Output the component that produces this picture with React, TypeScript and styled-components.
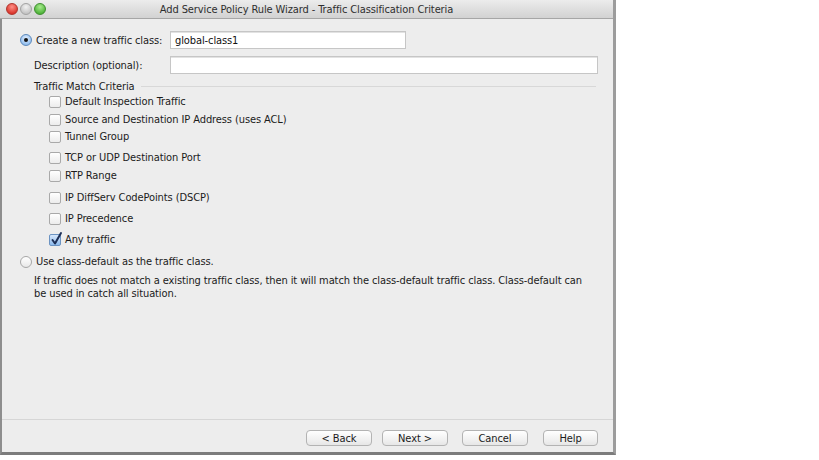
import React from "react";
import styled, { createGlobalStyle } from "styled-components";

const GlobalStyle = createGlobalStyle`
  html, body { margin: 0; padding: 0; background: #ffffff; }
  body {
    font-family: "DejaVu Sans Condensed", "DejaVu Sans", sans-serif;
    font-size: 11px;
    letter-spacing: -0.1px;
    color: #1b1b1b;
  }
  * { box-sizing: border-box; }
`;

const Window = styled.div`
  width: 616px;
  height: 455px;
  display: flex;
  flex-direction: column;
  background: #ededed;
  border-left: 2px solid #8e8e8e;
  border-right: 3px solid #9c9c9c;
  border-bottom: 3px solid #7c7c7c;
`;

const TitleBar = styled.div`
  height: 19px;
  flex: 0 0 19px;
  position: relative;
  display: flex;
  align-items: center;
  justify-content: center;
  background: linear-gradient(#ececec, #d2d2d2);
  border-bottom: 1px solid #a6a6a6;
  margin-left: -2px;
`;

const Lights = styled.div`
  position: absolute;
  left: 6px;
  top: 3px;
  display: flex;
  gap: 2px;
`;

const Light = styled.span<{ $c1: string; $c2: string; $b: string }>`
  width: 12px;
  height: 12px;
  border-radius: 50%;
  background: radial-gradient(circle at 50% 30%, ${(p) => p.$c1}, ${(p) => p.$c2} 75%);
  border: 1px solid ${(p) => p.$b};
`;

const Title = styled.div`
  font-size: 11px;
  color: #2e2e2e;
  padding-top: 1px;
`;

const Content = styled.div`
  flex: 1;
  padding: 12px 16px 0 18px;
  display: flex;
  flex-direction: column;
`;

const FieldRow = styled.div`
  display: grid;
  grid-template-columns: 150px auto;
  align-items: center;
  height: 18px;
  margin-bottom: 7px;
`;

const LabelWrap = styled.label<{ $indent?: boolean }>`
  display: flex;
  align-items: center;
  gap: 4px;
  padding-left: ${(p) => (p.$indent ? "14px" : "0")};
  white-space: nowrap;
`;

const TextInput = styled.div<{ $w: number }>`
  width: ${(p) => p.$w}px;
  height: 18px;
  background: #ffffff;
  border: 1px solid #c6c6c6;
  box-shadow: inset 0 1px 0 #e2e2e2;
  padding: 0 4px;
  display: flex;
  align-items: center;
  color: #111;
`;

const GroupHeader = styled.div`
  display: flex;
  align-items: center;
  gap: 6px;
  height: 13px;
  margin-top: -1px;
  padding-left: 14px;
  margin-right: 1px;
  &::after {
    content: "";
    flex: 1;
    height: 1px;
    background: #d8d8d8;
  }
`;

const CheckList = styled.div`
  display: flex;
  flex-direction: column;
  padding-left: 29px;
  margin-top: 0px;
`;

const CheckRow = styled.label<{ $gap: number }>`
  display: flex;
  align-items: center;
  gap: 4px;
  height: 17px;
  margin-top: ${(p) => p.$gap}px;
`;

const Box = styled.span<{ $checked?: boolean }>`
  position: relative;
  width: 12px;
  height: 12px;
  border-radius: 2px;
  border: 1px solid ${(p) => (p.$checked ? "#6b93c2" : "#a9a9a9")};
  background: ${(p) =>
    p.$checked
      ? "linear-gradient(#d6e7fb, #8dbbee)"
      : "linear-gradient(#ffffff, #ececec)"};
  flex: 0 0 12px;
  svg {
    position: absolute;
    left: 0px;
    top: -4px;
  }
`;

const RadioRow = styled.label`
  display: flex;
  align-items: center;
  gap: 4px;
  height: 17px;
  margin-top: 5px;
`;

const Radio = styled.span<{ $checked?: boolean }>`
  width: 12px;
  height: 12px;
  border-radius: 50%;
  flex: 0 0 12px;
  display: flex;
  align-items: center;
  justify-content: center;
  border: 1px solid ${(p) => (p.$checked ? "#5d89bb" : "#a7a7a7")};
  background: ${(p) =>
    p.$checked
      ? "radial-gradient(circle at 50% 35%, #e3efff, #8ab9ec 80%)"
      : "linear-gradient(#ffffff, #e8e8e8)"};
  &::after {
    content: "";
    display: ${(p) => (p.$checked ? "block" : "none")};
    width: 4px;
    height: 4px;
    border-radius: 50%;
    background: #111;
  }
`;

const Paragraph = styled.p`
  margin: 4px 0 0 0;
  padding-left: 14px;
  padding-right: 0;
  line-height: 13px;
`;

const Footer = styled.div`
  flex: 0 0 33px;
  border-top: 1px solid #d6d6d6;
  display: flex;
  justify-content: flex-end;
  align-items: flex-start;
  padding: 10px 15px 0 0;
  gap: 10px;
`;

const Button = styled.button<{ $w: number; $push?: number }>`
  width: ${(p) => p.$w}px;
  height: 16px;
  margin-left: ${(p) => p.$push ?? 0}px;
  padding: 0;
  font-family: inherit;
  font-size: 11px;
  letter-spacing: inherit;
  color: #1b1b1b;
  background: linear-gradient(#ffffff, #f1f1f1 60%, #e6e6e6);
  border: 1px solid #b3b3b3;
  border-radius: 4px;
  display: flex;
  align-items: center;
  justify-content: center;
  line-height: 1;
`;

const criteria = [
  { label: "Default Inspection Traffic", gap: 0 },
  { label: "Source and Destination IP Address (uses ACL)", gap: 1 },
  { label: "Tunnel Group", gap: 0 },
  { label: "TCP or UDP Destination Port", gap: 4 },
  { label: "RTP Range", gap: 1 },
  { label: "IP DiffServ CodePoints (DSCP)", gap: 5 },
  { label: "IP Precedence", gap: 4 },
  { label: "Any traffic", gap: 4, checked: true },
];

const Check = () => (
  <svg width="14" height="15" viewBox="0 0 14 15">
    <path
      d="M2.5 9 L5 12.5 L11 2"
      fill="none"
      stroke="#1d2f57"
      strokeWidth="2"
      strokeLinecap="round"
      strokeLinejoin="round"
    />
  </svg>
);

export default function App() {
  return (
    <>
      <GlobalStyle />
      <Window>
        <TitleBar>
          <Lights>
            <Light $c1="#ff8f86" $c2="#d9352c" $b="#b0342c" />
            <Light $c1="#f2f2f2" $c2="#c3c3c3" $b="#a3a3a3" />
            <Light $c1="#a8ec8e" $c2="#4fb33a" $b="#3e8e2f" />
          </Lights>
          <Title>Add Service Policy Rule Wizard - Traffic Classification Criteria</Title>
        </TitleBar>
        <Content>
          <FieldRow>
            <LabelWrap>
              <Radio $checked />
              Create a new traffic class:
            </LabelWrap>
            <TextInput $w={236}>global-class1</TextInput>
          </FieldRow>
          <FieldRow>
            <LabelWrap $indent>Description (optional):</LabelWrap>
            <TextInput $w={428} />
          </FieldRow>
          <GroupHeader>Traffic Match Criteria</GroupHeader>
          <CheckList>
            {criteria.map((c) => (
              <CheckRow key={c.label} $gap={c.gap}>
                <Box $checked={c.checked}>{c.checked && <Check />}</Box>
                {c.label}
              </CheckRow>
            ))}
          </CheckList>
          <RadioRow>
            <Radio />
            Use class-default as the traffic class.
          </RadioRow>
          <Paragraph>
            If traffic does not match a existing traffic class, then it will match the
            class-default traffic class. Class-default can be used in catch all situation.
          </Paragraph>
        </Content>
        <Footer>
          <Button $w={66}>&lt; Back</Button>
          <Button $w={66}>Next &gt;</Button>
          <Button $w={66} $push={4}>Cancel</Button>
          <Button $w={55} $push={5}>Help</Button>
        </Footer>
      </Window>
    </>
  );
}
